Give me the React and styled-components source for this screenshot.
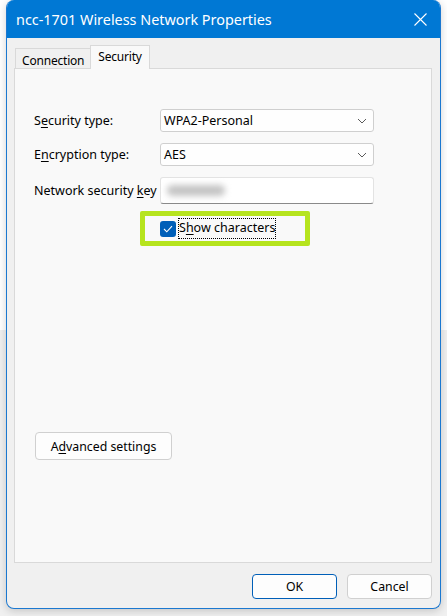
import styled, { createGlobalStyle } from "styled-components";

const GlobalStyle = createGlobalStyle`
  html, body {
    margin: 0;
    padding: 0;
    background: #f3f3f3;
    font-family: "Noto Sans", "Open Sans", sans-serif;
  }
  * { box-sizing: border-box; }
`;

const Page = styled.div`
  width: 447px;
  height: 616px;
  overflow: hidden;
  padding-left: 6px;
  background: linear-gradient(to bottom, #ffffff 0, #ffffff 330px, #f0f0f0 330px);
`;

const Window = styled.div`
  width: 435px;
  height: 609px;
  border: 1px solid #1b78d0;
  border-top: none;
  border-radius: 8px;
  overflow: hidden;
  background: #f0f0f0;
  display: flex;
  flex-direction: column;
  box-shadow: 0 2px 8px rgba(0, 0, 0, 0.18);
`;

const TitleBar = styled.div`
  height: 38px;
  margin: 0 -1px;
  background: #0078d4;
  color: #fff;
  display: flex;
  align-items: center;
  justify-content: space-between;
  padding: 0 14px 0 10px;
  font-size: 14.4px;
`;

const Body = styled.div`
  flex: 1;
  display: flex;
  flex-direction: column;
  padding: 8px 8px 0 7px;
`;

const TabStrip = styled.div`
  display: flex;
  align-items: flex-end;
  height: 23px;
  padding-left: 1px;
  position: relative;
  z-index: 1;
  margin-bottom: -1px;
`;

const Tab = styled.div`
  height: ${(p) => (p.$active ? "24px" : "21px")};
  padding: ${(p) => (p.$active ? "2px 7px 0 7px" : "3px 6px 0 6px")};
  margin-left: ${(p) => (p.$active ? "-1px" : "0")};
  font-size: 12px;
  color: #000;
  background: ${(p) => (p.$active ? "#f9f9f9" : "#f0f0f0")};
  border: 1px solid #d9d9d9;
  border-bottom: ${(p) => (p.$active ? "none" : "1px solid #d9d9d9")};
  letter-spacing: -0.2px;
`;

const Panel = styled.div`
  height: 495px;
  background: #f9f9f9;
  border: 1px solid #d9d9d9;
  display: flex;
  flex-direction: column;
  padding: 40px 0 0 19px;
`;

const Form = styled.div`
  display: grid;
  grid-template-columns: 126px 214px;
  row-gap: 11px;
  align-items: center;
`;

const Label = styled.div`
  font-size: 12.5px;
  color: #000;
`;

const Key = styled.span`
  text-decoration: underline;
  text-underline-offset: 2px;
`;

const Select = styled.div`
  height: 23px;
  background: #fefefe;
  border: 1px solid #cfcfcf;
  border-radius: 3px;
  display: flex;
  align-items: center;
  justify-content: space-between;
  padding: 0 6px 0 3px;
  font-size: 12.5px;
`;

const TextBox = styled.div`
  height: 27px;
  background: #ffffff;
  border: 1px solid #e3e3e3;
  border-bottom: 1px solid #8a8a8a;
  border-radius: 3px;
  display: flex;
  align-items: center;
  padding-left: 6px;
`;

const Blurred = styled.div`
  width: 58px;
  height: 11px;
  background: #c4c4c4;
  border-radius: 5px;
  filter: blur(3px);
`;

const Highlight = styled.div`
  margin: 7px 0 0 106px;
  width: 170px;
  height: 35px;
  border: 5px solid #b6e41e;
  border-radius: 2px;
  display: flex;
  align-items: center;
  gap: 3px;
  padding-left: 15px;
`;

const Check = styled.div`
  width: 16px;
  height: 16px;
  border-radius: 3px;
  background: #005fb8;
  display: flex;
  align-items: center;
  justify-content: center;
`;

const CheckLabel = styled.div`
  font-size: 12.5px;
  outline: 1px dotted #000;
  padding: 1px 0 2px 0;
  line-height: 16px;
`;

const Button = styled.div`
  width: ${(p) => p.$w || "85px"};
  height: ${(p) => p.$h || "25px"};
  background: #fdfdfd;
  border: 1px solid ${(p) => (p.$primary ? "#005fb8" : "#d0d0d0")};
  border-radius: 4px;
  display: flex;
  align-items: center;
  justify-content: center;
  font-size: 12.3px;
  color: #000;
`;

const AdvancedWrap = styled.div`
  margin: 186px 0 0 1px;
`;

const Footer = styled.div`
  display: flex;
  justify-content: flex-end;
  gap: 10px;
  padding-top: 11px;
`;

const Chevron = () => (
  <svg width="10" height="6" viewBox="0 0 10 6">
    <path d="M1 1 L5 5 L9 1" fill="none" stroke="#5a5a5a" strokeWidth="1" />
  </svg>
);

const CloseIcon = () => (
  <svg width="13" height="13" viewBox="0 0 13 13">
    <path d="M0.5 0.5 L12.5 12.5 M12.5 0.5 L0.5 12.5" stroke="#fff" strokeWidth="1.1" />
  </svg>
);

const CheckMark = () => (
  <svg width="10" height="8" viewBox="0 0 10 8">
    <path d="M1 4 L3.8 6.8 L9 1.2" fill="none" stroke="#fff" strokeWidth="1.1" />
  </svg>
);

export default function App() {
  return (
    <>
      <GlobalStyle />
      <Page>
        <Window>
          <TitleBar>
            <span>ncc-1701 Wireless Network Properties</span>
            <CloseIcon />
          </TitleBar>
          <Body>
            <TabStrip>
              <Tab>Connection</Tab>
              <Tab $active>Security</Tab>
            </TabStrip>
            <Panel>
              <Form>
                <Label>
                  S<Key>e</Key>curity type:
                </Label>
                <Select>
                  <span>WPA2-Personal</span>
                  <Chevron />
                </Select>
                <Label>
                  E<Key>n</Key>cryption type:
                </Label>
                <Select>
                  <span>AES</span>
                  <Chevron />
                </Select>
                <Label>
                  Network security <Key>k</Key>ey
                </Label>
                <TextBox>
                  <Blurred />
                </TextBox>
              </Form>
              <Highlight>
                <Check>
                  <CheckMark />
                </Check>
                <CheckLabel>
                  S<Key>h</Key>ow characters
                </CheckLabel>
              </Highlight>
              <AdvancedWrap>
                <Button $w="137px" $h="28px">
                  A<Key>d</Key>vanced settings
                </Button>
              </AdvancedWrap>
            </Panel>
            <Footer>
              <Button $primary>OK</Button>
              <Button>Cancel</Button>
            </Footer>
          </Body>
        </Window>
      </Page>
    </>
  );
}
